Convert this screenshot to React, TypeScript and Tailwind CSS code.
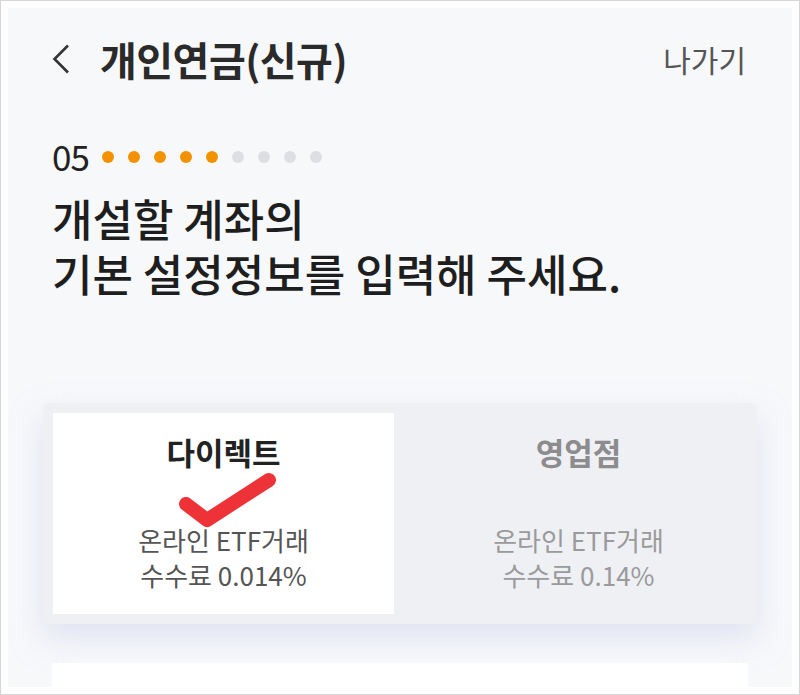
import React from "react";

const steps = [true, true, true, true, true, false, false, false, false];

const Option = ({
  title,
  line1,
  line2,
  active,
}: {
  title: string;
  line1: string;
  line2: string;
  active?: boolean;
}) => {
  return (
    <div
      className={
        "relative flex flex-col items-center " +
        (active ? "w-[341px] bg-white" : "flex-1 pl-[16px] bg-transparent")
      }
    >
      <div
        className={
          "mt-[19px] text-[31px] leading-[40px] font-bold " +
          (active ? "text-[#222]" : "text-[#8c8c8e]")
        }
      >
        {title}
      </div>
      <div
        className={
          "mt-[50px] text-[26px] leading-[35px] text-center " +
          (active ? "text-[#555]" : "text-[#9a9a9c]")
        }
      >
        <div>{line1}</div>
        <div>{line2}</div>
      </div>
      {active && (
        <svg
          className="absolute left-[124px] top-[58px]"
          width="100"
          height="64"
          viewBox="0 0 100 64"
        >
          <path
            d="M9 33 L30 49 L92 9"
            fill="none"
            stroke="#ee3338"
            strokeWidth="14"
            strokeLinecap="round"
            strokeLinejoin="round"
          />
        </svg>
      )}
    </div>
  );
};

export default function App() {
  return (
    <div
      className="w-[800px] h-[695px] bg-white border border-[#d6d6d6] p-[7px]"
      style={{ fontFamily: '"Noto Sans CJK KR", "Noto Sans", sans-serif' }}
    >
      <div className="h-full bg-[#f7f8fa] overflow-hidden flex flex-col">
        <header className="mt-[23px] h-[56px] flex items-center pl-[44px] pr-[46px]">
          <svg width="18" height="30" viewBox="0 0 18 30" className="shrink-0">
            <path
              d="M16 1.5 L2.5 15 L16 28.5"
              fill="none"
              stroke="#333"
              strokeWidth="2.6"
            />
          </svg>
          <h1 className="ml-[30px] text-[40px] leading-none font-bold text-[#2a2a2a] tracking-[-0.5px]">
            개인연금(신규)
          </h1>
          <div className="ml-auto text-[30px] leading-none text-[#555]">나가기</div>
        </header>

        <div className="mt-[51px] h-[35px] pl-[44px] flex items-center">
          <span className="text-[35px] leading-none text-[#222] tracking-[-1px]">05</span>
          <div className="ml-[13px] mt-[3px] flex gap-[14px]">
            {steps.map((on, i) => (
              <span
                key={i}
                className={
                  "w-[12px] h-[12px] rounded-full " +
                  (on ? "bg-[#f39200]" : "bg-[#dcdee2]")
                }
              />
            ))}
          </div>
        </div>

        <h2 className="mt-[18px] pl-[44px] text-[44px] font-medium text-[#1e1e1e]">
          <div className="h-[55px] leading-[55px]">개설할 계좌의</div>
          <div className="h-[55px] leading-[55px]">기본 설정정보를 입력해 주세요.</div>
        </h2>

        <div className="mt-[102px] mx-[35px] rounded-[6px] bg-[#eff0f3] p-[10px] flex h-[221px] shadow-[0_14px_30px_rgba(205,210,235,0.55)]">
          <Option title="다이렉트" line1="온라인 ETF거래" line2="수수료 0.014%" active />
          <Option title="영업점" line1="온라인 ETF거래" line2="수수료 0.14%" />
        </div>

        <div className="mt-[39px] mx-[44px] flex-1 bg-white rounded-t-[4px]" />
      </div>
    </div>
  );
}
